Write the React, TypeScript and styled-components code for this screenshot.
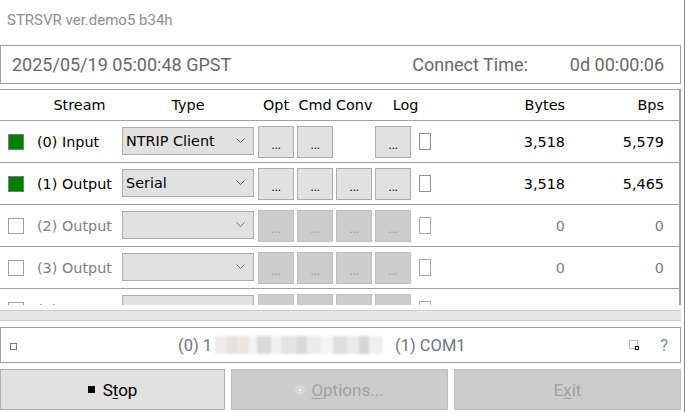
import React from "react";
import styled, { createGlobalStyle } from "styled-components";

const GlobalStyle = createGlobalStyle`
  html, body { margin: 0; padding: 0; background: #ffffff; overflow: hidden; }
  #root { width: 685px; height: 412px; }
`;

const Window = styled.div`
  width: 685px;
  height: 412px;
  box-sizing: border-box;
  background: #ffffff;
  border-right: 1px solid #8a8a8a;
  overflow: hidden;
  display: flex;
  flex-direction: column;
`;

const TitleBar = styled.div`
  height: 45px;
  box-sizing: border-box;
  padding: 10px 0 0 7px;
  font-family: Roboto, "Liberation Sans", sans-serif;
  font-size: 15px;
  line-height: 20px;
  color: #8e8e8e;
`;

const StatusPanel = styled.div`
  width: 681px;
  height: 39px;
  box-sizing: border-box;
  border: 1px solid #a0a0a0;
  display: flex;
  align-items: center;
  padding: 0 16px 0 11px;
  font-family: Roboto, "Liberation Sans", sans-serif;
  font-size: 18px;
  color: #686868;
`;

const StatusRight = styled.div`
  margin-left: auto;
  display: flex;
  gap: 42px;
`;

const Table = styled.div`
  margin-top: 5px;
  width: 681px;
  height: 216px;
  box-sizing: border-box;
  border-top: 1px solid #a0a0a0;
  border-right: 2px solid #a0a0a0;
  overflow: hidden;
  font-family: "DejaVu Sans", Verdana, sans-serif;
  font-size: 14.4px;
`;

const cols = "37px 85px 136px 39px 39px 39px 44px 11px 135px 99px";

const HeaderRow = styled.div`
  display: grid;
  grid-template-columns: ${cols};
  align-items: center;
  height: 31px;
  box-sizing: border-box;
  border-bottom: 1px solid #a0a0a0;
  color: #000000;
`;

const HeadCell = styled.div<{ $start: number; $span?: number; $align?: string; $w?: number; $pl?: number }>`
  grid-column: ${(p) => p.$start} / span ${(p) => p.$span ?? 1};
  text-align: ${(p) => p.$align ?? "center"};
  width: ${(p) => (p.$w ? `${p.$w}px` : "auto")};
  padding-left: ${(p) => p.$pl ?? 0}px;
  white-space: nowrap;
`;

const Row = styled.div`
  display: grid;
  grid-template-columns: ${cols};
  align-items: center;
  height: 42px;
  box-sizing: border-box;
  border-bottom: 1px solid #a0a0a0;
`;

const Check = styled.div<{ $on: boolean }>`
  margin-left: 8px;
  width: 16px;
  height: 16px;
  box-sizing: border-box;
  border: 1px solid ${(p) => (p.$on ? "#7c7c7c" : "#a0a0a0")};
  background: ${(p) => (p.$on ? "#008000" : "#ffffff")};
`;

const Label = styled.div<{ $on: boolean }>`
  color: ${(p) => (p.$on ? "#000000" : "#808080")};
  white-space: nowrap;
`;

const Combo = styled.div<{ $on: boolean }>`
  width: 132px;
  height: 28px;
  margin-top: -2px;
  box-sizing: border-box;
  background: #e1e1e1;
  border: 1px solid #adadad;
  display: flex;
  align-items: center;
  padding: 0 8px 0 3px;
  color: #000000;
  svg { margin-left: auto; color: ${(p) => (p.$on ? "#555555" : "#707070")}; }
`;

const DotButton = styled.div<{ $on: boolean }>`
  width: 36px;
  height: 32px;
  box-sizing: border-box;
  background: ${(p) => (p.$on ? "#e1e1e1" : "#cccccc")};
  border: 1px solid ${(p) => (p.$on ? "#adadad" : "#bfbfbf")};
  display: flex;
  align-items: center;
  justify-content: center;
  padding-top: 5px;
  font-family: "Liberation Sans", Arial, sans-serif;
  font-size: 13px;
  line-height: 13px;
  letter-spacing: -0.4px;
  color: ${(p) => (p.$on ? "#0a1030" : "#9c9c9c")};
`;

const LogBox = styled.div<{ $on: boolean }>`
  width: 12px;
  height: 17px;
  box-sizing: border-box;
  border: 1px solid ${(p) => (p.$on ? "#909090" : "#a8a8a8")};
  background: #ffffff;
`;

const Num = styled.div<{ $on: boolean }>`
  text-align: right;
  color: ${(p) => (p.$on ? "#000000" : "#808080")};
`;

const ScrollBar = styled.div`
  margin-top: 5px;
  width: 681px;
  height: 11px;
  box-sizing: border-box;
  background: #e6e6e6;
  border-top: 1px solid #cdcdcd;
  border-bottom: 1px solid #cdcdcd;
`;

const MsgPanel = styled.div`
  margin-top: 6px;
  width: 681px;
  height: 36px;
  box-sizing: border-box;
  border: 1px solid #a0a0a0;
  display: flex;
  align-items: center;
  padding: 0 12px 0 9px;
  font-family: Roboto, "Liberation Sans", sans-serif;
  font-size: 16.5px;
  color: #6e7480;
`;

const TinySquare = styled.div`
  width: 7px;
  height: 7px;
  box-sizing: border-box;
  border: 1px solid #7a7a7a;
  margin-top: 2px;
`;

const Message = styled.div`
  margin-left: 161px;
  display: flex;
  align-items: center;
  white-space: nowrap;
`;

const Blur = styled.span`
  display: inline-flex;
  height: 18px;
  margin-left: 3px;
  filter: blur(1.2px);
`;

const BlurBit = styled.span<{ $c: string; $w: number }>`
  display: block;
  width: ${(p) => p.$w}px;
  height: 100%;
  background: ${(p) => p.$c};
`;

const MsgTail = styled.span`
  margin-left: 12px;
`;

const RightIcons = styled.div`
  margin-left: auto;
  display: flex;
  align-items: center;
  gap: 21px;
`;

const Help = styled.span`
  color: #7a8aa2;
`;

const ButtonRow = styled.div`
  margin-top: 6px;
  width: 681px;
  display: grid;
  grid-template-columns: 225px 217px 227px;
  column-gap: 6px;
`;

const BigButton = styled.div<{ $on: boolean }>`
  height: 41px;
  box-sizing: border-box;
  background: ${(p) => (p.$on ? "#e1e1e1" : "#cccccc")};
  border: 1px solid ${(p) => (p.$on ? "#adadad" : "#bfbfbf")};
  display: flex;
  align-items: center;
  justify-content: center;
  font-family: Roboto, "Liberation Sans", sans-serif;
  font-size: 17px;
  color: ${(p) => (p.$on ? "#000000" : "#a0a0a0")};
  u { text-underline-offset: 2px; }
`;

const StopMark = styled.span`
  width: 7px;
  height: 7px;
  background: #000000;
  margin-right: 8px;
`;

const Chevron = () => (
  <svg width="9" height="5" viewBox="0 0 9 5" fill="none">
    <polyline points="0.5,0.5 4.5,4.5 8.5,0.5" stroke="currentColor" strokeWidth="1" />
  </svg>
);

const GripIcon = () => (
  <svg width="10" height="10" viewBox="0 0 10 10" fill="none">
    <rect x="0.5" y="0.5" width="8" height="8" stroke="#7a7a7a" strokeWidth="1" strokeDasharray="1 1" />
    <rect x="6.5" y="6.5" width="3" height="3" fill="#ffffff" stroke="#000000" strokeWidth="1" />
  </svg>
);

const GearIcon = () => (
  <svg width="10" height="10" viewBox="0 0 10 10" fill="none" style={{ marginRight: 6 }}>
    <circle cx="5" cy="5" r="3.5" stroke="#f4f4f4" strokeWidth="2" strokeDasharray="1.4 1" />
    <circle cx="5" cy="5" r="3.5" stroke="#b0b0b0" strokeWidth="0.6" strokeDasharray="1 1.4" />
    <circle cx="5" cy="5" r="1.4" fill="#f4f4f4" />
  </svg>
);

type StreamRow = {
  label: string;
  on: boolean;
  type: string;
  conv: boolean;
  bytes: string;
  bps: string;
};

const rows: StreamRow[] = [
  { label: "(0) Input", on: true, type: "NTRIP Client", conv: false, bytes: "3,518", bps: "5,579" },
  { label: "(1) Output", on: true, type: "Serial", conv: true, bytes: "3,518", bps: "5,465" },
  { label: "(2) Output", on: false, type: "", conv: true, bytes: "0", bps: "0" },
  { label: "(3) Output", on: false, type: "", conv: true, bytes: "0", bps: "0" },
  { label: "(4) Output", on: false, type: "", conv: true, bytes: "0", bps: "0" },
];

const blurBits: [string, number][] = [
  ["#ececec", 12], ["#e4e1de", 10], ["#ebe6e2", 12], ["#f3f3f3", 8], ["#d9d9d9", 14],
  ["#f1f1f1", 10], ["#e3e3e3", 16], ["#dadada", 10], ["#ebebeb", 14], ["#f4f4f4", 12],
  ["#dedede", 14], ["#eaeaea", 12], ["#d6d6d6", 10], ["#efefef", 14],
];

export default function App() {
  return (
    <>
      <GlobalStyle />
      <Window>
        <TitleBar>STRSVR ver.demo5 b34h</TitleBar>
        <StatusPanel>
          <span>2025/05/19 05:00:48 GPST</span>
          <StatusRight>
            <span>Connect Time:</span>
            <span>0d 00:00:06</span>
          </StatusRight>
        </StatusPanel>
        <Table>
          <HeaderRow>
            <HeadCell $start={2}>Stream</HeadCell>
            <HeadCell $start={3} $w={132}>Type</HeadCell>
            <HeadCell $start={4} $w={36}>Opt</HeadCell>
            <HeadCell $start={5} $w={36}>Cmd</HeadCell>
            <HeadCell $start={6} $w={36}>Conv</HeadCell>
            <HeadCell $start={7} $span={2} $pl={6}>Log</HeadCell>
            <HeadCell $start={9} $align="right">Bytes</HeadCell>
            <HeadCell $start={10} $align="right">Bps</HeadCell>
          </HeaderRow>
          {rows.map((r) => (
            <Row key={r.label}>
              <Check $on={r.on} />
              <Label $on={r.on}>{r.label}</Label>
              <Combo $on={r.on}>
                <span>{r.type}</span>
                <Chevron />
              </Combo>
              <DotButton $on={r.on}>...</DotButton>
              <DotButton $on={r.on}>...</DotButton>
              {r.conv ? <DotButton $on={r.on}>...</DotButton> : <div />}
              <DotButton $on={r.on}>...</DotButton>
              <LogBox $on={r.on} />
              <Num $on={r.on}>{r.bytes}</Num>
              <Num $on={r.on}>{r.bps}</Num>
            </Row>
          ))}
        </Table>
        <ScrollBar />
        <MsgPanel>
          <TinySquare />
          <Message>
            <span>(0) 1</span>
            <Blur>
              {blurBits.map(([c, w], i) => (
                <BlurBit key={i} $c={c} $w={w} />
              ))}
            </Blur>
            <MsgTail>(1) COM1</MsgTail>
          </Message>
          <RightIcons>
            <GripIcon />
            <Help>?</Help>
          </RightIcons>
        </MsgPanel>
        <ButtonRow>
          <BigButton $on={true}>
            <StopMark />
            <span>
              S<u>t</u>op
            </span>
          </BigButton>
          <BigButton $on={false}>
            <GearIcon />
            <span>
              <u>O</u>ptions...
            </span>
          </BigButton>
          <BigButton $on={false}>
            <span>
              E<u>x</u>it
            </span>
          </BigButton>
        </ButtonRow>
      </Window>
    </>
  );
}
